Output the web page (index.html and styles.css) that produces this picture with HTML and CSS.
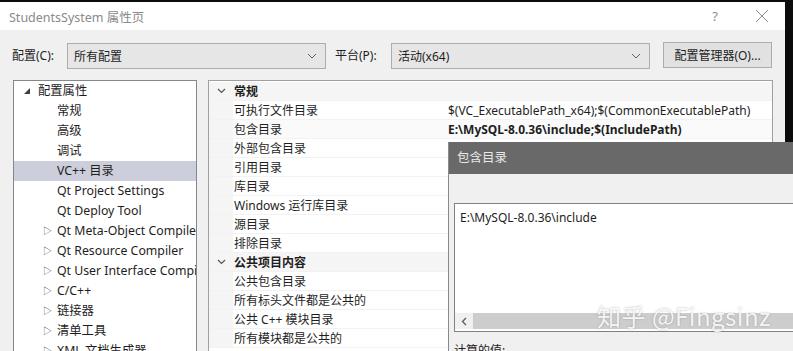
FILE: index.html
```html
<!DOCTYPE html>
<html lang="zh-CN">
<head>
  <meta charset="UTF-8">
  <title>StudentsSystem 属性页</title>
  <link rel="stylesheet" href="styles.css">
</head>
<body>
  <div class="window">
    <div class="title-bar">
      <span class="title">StudentsSystem 属性页</span>
      <span class="title-btn help">?</span>
      <span class="title-btn close">
        <svg width="14" height="14" viewBox="0 0 14 14"><path d="M1 1 L13 13 M13 1 L1 13" stroke="#8c8c8c" stroke-width="1"/></svg>
      </span>
    </div>

    <div class="toolbar">
      <label class="field-label label-config">配置(C):</label>
      <div class="combo combo-config">
        <span>所有配置</span>
        <svg class="chevron" width="10" height="6" viewBox="0 0 10 6"><path d="M1 1 L5 5 L9 1" fill="none" stroke="#606060" stroke-width="1"/></svg>
      </div>
      <label class="field-label label-platform">平台(P):</label>
      <div class="combo combo-platform">
        <span>活动(x64)</span>
        <svg class="chevron" width="10" height="6" viewBox="0 0 10 6"><path d="M1 1 L5 5 L9 1" fill="none" stroke="#606060" stroke-width="1"/></svg>
      </div>
      <button class="btn">配置管理器(O)...</button>
    </div>

    <div class="content">
      <div class="tree">
        <div class="tree-item level0"><span class="open-tri"></span>配置属性</div>
        <div class="tree-item level1">常规</div>
        <div class="tree-item level1">高级</div>
        <div class="tree-item level1">调试</div>
        <div class="tree-item level1 selected">VC++ 目录</div>
        <div class="tree-item level1">Qt Project Settings</div>
        <div class="tree-item level1">Qt Deploy Tool</div>
        <div class="tree-item level1"><span class="exp">▷</span>Qt Meta-Object Compiler</div>
        <div class="tree-item level1"><span class="exp">▷</span>Qt Resource Compiler</div>
        <div class="tree-item level1"><span class="exp">▷</span>Qt User Interface Compiler</div>
        <div class="tree-item level1"><span class="exp">▷</span>C/C++</div>
        <div class="tree-item level1"><span class="exp">▷</span>链接器</div>
        <div class="tree-item level1"><span class="exp">▷</span>清单工具</div>
        <div class="tree-item level1"><span class="exp">▷</span>XML 文档生成器</div>
      </div>

      <div class="grid">
        <div class="grid-row category">
          <span class="gutter"><svg width="9" height="6" viewBox="0 0 9 6"><path d="M1 1 L4.5 4.5 L8 1" fill="none" stroke="#555" stroke-width="1.2"/></svg></span>
          <span class="name">常规</span>
        </div>
        <div class="grid-row"><span class="gutter"></span><span class="name">可执行文件目录</span><span class="value">$(VC_ExecutablePath_x64);$(CommonExecutablePath)</span></div>
        <div class="grid-row alt"><span class="gutter"></span><span class="name">包含目录</span><span class="value bold">E:\MySQL-8.0.36\include;$(IncludePath)</span></div>
        <div class="grid-row"><span class="gutter"></span><span class="name">外部包含目录</span><span class="value"></span></div>
        <div class="grid-row"><span class="gutter"></span><span class="name">引用目录</span><span class="value"></span></div>
        <div class="grid-row"><span class="gutter"></span><span class="name">库目录</span><span class="value"></span></div>
        <div class="grid-row"><span class="gutter"></span><span class="name">Windows 运行库目录</span><span class="value"></span></div>
        <div class="grid-row"><span class="gutter"></span><span class="name">源目录</span><span class="value"></span></div>
        <div class="grid-row"><span class="gutter"></span><span class="name">排除目录</span><span class="value"></span></div>
        <div class="grid-row category">
          <span class="gutter"><svg width="9" height="6" viewBox="0 0 9 6"><path d="M1 1 L4.5 4.5 L8 1" fill="none" stroke="#555" stroke-width="1.2"/></svg></span>
          <span class="name">公共项目内容</span>
        </div>
        <div class="grid-row"><span class="gutter"></span><span class="name">公共包含目录</span><span class="value"></span></div>
        <div class="grid-row"><span class="gutter"></span><span class="name">所有标头文件都是公共的</span><span class="value"></span></div>
        <div class="grid-row"><span class="gutter"></span><span class="name">公共 C++ 模块目录</span><span class="value"></span></div>
        <div class="grid-row"><span class="gutter"></span><span class="name">所有模块都是公共的</span><span class="value"></span></div>
      </div>
    </div>
  </div>

  <!-- the include-directories editor dialog sits over the property page -->
  <div class="dialog">
    <div class="dialog-title">包含目录</div>
    <div class="dialog-body">
      <div class="editor">
        <div class="editor-text">E:\MySQL-8.0.36\include</div>
        <div class="hscroll">
          <span class="arrow">
            <svg width="6" height="9" viewBox="0 0 6 9"><path d="M5 1 L1.5 4.5 L5 8" fill="none" stroke="#606060" stroke-width="1.4"/></svg>
          </span>
          <span class="thumb"></span>
        </div>
      </div>
      <div class="computed">计算的值:</div>
    </div>
  </div>

  <div class="watermark">知乎 @Fingsinz</div>
</body>
</html>
```

FILE: styles.css
```css
* {
  margin: 0;
  padding: 0;
  box-sizing: border-box;
}

body {
  width: 793px;
  height: 351px;
  overflow: hidden;
  background: #0c0c0c;
  font-family: "Segoe UI", "Noto Sans", "Noto Sans CJK SC", sans-serif;
  font-size: 12px;
  color: #1e1e1e;
  position: relative;
  padding-top: 2px;
}

.window {
  width: 785px;
  height: 349px;
  background: #f0f0f0;
}

/* title bar */
.title-bar {
  height: 28px;
  background: #ffffff;
  display: flex;
  align-items: center;
  padding-left: 9px;
}

.title {
  color: #8a8a8a;
  font-size: 12.5px;
  flex: 1;
}

.title-btn {
  color: #8c8c8c;
  display: flex;
  align-items: center;
  justify-content: center;
}

.help {
  width: 14px;
  margin-right: 33px;
  font-size: 13px;
}

.close {
  width: 14px;
  margin-right: 16px;
}

/* configuration row */
.toolbar {
  height: 50px;
  display: flex;
  align-items: flex-start;
  padding: 13px 0 0 12px;
}

.field-label {
  height: 26px;
  line-height: 26px;
}

.label-config {
  width: 55px;
}

.label-platform {
  width: 56px;
}

.combo {
  height: 26px;
  background: #e6e6e6;
  border: 1px solid #adadad;
  display: flex;
  align-items: center;
  padding: 0 6px;
  margin-right: 9px;
}

.combo span {
  flex: 1;
}

.combo-config {
  width: 259px;
}

.combo-platform {
  width: 259px;
  margin-right: 13px;
}

.chevron {
  margin-right: 2px;
}

.btn {
  height: 26px;
  width: 109px;
  margin-top: -1px;
  background: #e1e1e1;
  border: 1px solid #adadad;
  font: inherit;
  color: #1e1e1e;
}

/* main panes */
.content {
  display: flex;
  gap: 11px;
  padding-left: 13px;
}

.tree {
  width: 184px;
  height: 280px;
  background: #ffffff;
  border: 1px solid #828790;
  border-bottom: none;
  overflow: hidden;
}

.tree-item {
  height: 20px;
  line-height: 20px;
  font-size: 12.3px;
  white-space: nowrap;
  position: relative;
}

.level0 {
  padding-left: 10px;
}

.level1 {
  padding-left: 43px;
}

.selected {
  background: #cccedb;
}

.open-tri {
  display: inline-block;
  width: 0;
  height: 0;
  border-left: 6px solid transparent;
  border-bottom: 6px solid #404040;
  margin-right: 8px;
  vertical-align: 1px;
}

.exp {
  position: absolute;
  left: 29px;
  font-size: 9px;
  color: #505050;
}

.grid {
  width: 565px;
  height: 280px;
  background: #ffffff;
  border: 1px solid #a0a0a0;
  border-bottom: none;
  padding-top: 1px;
  overflow: hidden;
}

.grid-row {
  height: 19px;
  line-height: 19px;
  display: flex;
  white-space: nowrap;
  border-bottom: 1px solid #f2f2f2;
}

.gutter {
  width: 24px;
  background: #f5f5f5;
  display: flex;
  align-items: center;
  justify-content: center;
}

.name {
  width: 215px;
  padding-left: 1px;
}

.value {
  flex: 1;
}

.bold {
  font-weight: bold;
}

.category {
  background: #f5f5f5;
  font-weight: bold;
}

.alt .name,
.alt .value {
  background: #fafafa;
}

/* include directories dialog */
.dialog {
  position: absolute;
  left: 448px;
  top: 142px;
  width: 345px;
  height: 209px;
  background: #f0f0f0;
  border-left: 1px solid #8a8a8a;
  display: flex;
  flex-direction: column;
}

.dialog-title {
  height: 32px;
  line-height: 32px;
  background: #696969;
  color: #e8e8e8;
  font-size: 12.5px;
  padding-left: 8px;
}

.dialog-body {
  padding: 29px 0 0 5px;
}

.editor {
  height: 129px;
  background: #ffffff;
  border: 1px solid #828282;
  border-right: none;
  display: flex;
  flex-direction: column;
  justify-content: space-between;
}

.editor-text {
  padding: 5px 0 0 5px;
}

.hscroll {
  height: 16px;
  display: flex;
  background: #f0f0f0;
  margin-bottom: 2px;
}

.arrow {
  width: 18px;
  display: flex;
  align-items: center;
  justify-content: center;
}

.thumb {
  flex: 1;
  background: #cdcdcd;
}

.computed {
  padding-top: 9px;
}

.watermark {
  position: absolute;
  left: 597px;
  top: 298px;
  font-size: 24px;
  font-family: "Noto Sans CJK SC", "Noto Sans", sans-serif;
  color: rgba(255, 255, 255, 0.9);
  text-shadow: 0 0 2px rgba(120, 120, 120, 0.6);
  letter-spacing: 0.5px;
}
```
